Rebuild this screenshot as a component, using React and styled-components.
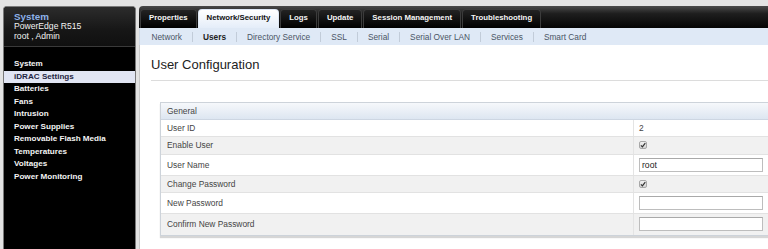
import styled, { createGlobalStyle } from "styled-components";

const NAV_ITEMS = [
  "System",
  "iDRAC Settings",
  "Batteries",
  "Fans",
  "Intrusion",
  "Power Supplies",
  "Removable Flash Media",
  "Temperatures",
  "Voltages",
  "Power Monitoring",
];

const TABS = ["Properties", "Network/Security", "Logs", "Update", "Session Management", "Troubleshooting"];

const SUBTABS = ["Network", "Users", "Directory Service", "SSL", "Serial", "Serial Over LAN", "Services", "Smart Card"];

const ROWS = [
  { label: "User ID", kind: "text", value: "2" },
  { label: "Enable User", kind: "check" },
  { label: "User Name", kind: "input", value: "root" },
  { label: "Change Password", kind: "check" },
  { label: "New Password", kind: "input", value: "" },
  { label: "Confirm New Password", kind: "input", value: "" },
];

const GlobalStyle = createGlobalStyle`
  html, body {
    margin: 0;
    padding: 0;
    overflow: hidden;
    background: #e3e3e3;
    font-family: "Liberation Sans", Arial, sans-serif;
  }
`;

const App = () => {
  return (
    <>
      <GlobalStyle />
      <Page>
        <Sidebar>
          <SideHeader>
            <SystemTitle>System</SystemTitle>
            <SideInfo>PowerEdge R515</SideInfo>
            <SideInfo>root , Admin</SideInfo>
          </SideHeader>
          <NavList>
            {NAV_ITEMS.map((item) => (
              <NavItem key={item} $active={item === "iDRAC Settings"}>{item}</NavItem>
            ))}
          </NavList>
        </Sidebar>
        <Main>
          <TabBar>
            {TABS.map((tab) => (
              <Tab key={tab} $active={tab === "Network/Security"}>{tab}</Tab>
            ))}
          </TabBar>
          <SubTabBar>
            {SUBTABS.map((sub) => (
              <SubTab key={sub} $active={sub === "Users"}>{sub}</SubTab>
            ))}
          </SubTabBar>
          <Content>
            <PageTitle>User Configuration</PageTitle>
            <Panel>
              <PanelHeader>General</PanelHeader>
              {ROWS.map((row, index) => (
                <Row key={row.label} $odd={index % 2 === 1} $tall={row.kind === "input"}>
                  <LabelCell>{row.label}</LabelCell>
                  <ValueCell>
                    {row.kind === "text" && row.value}
                    {row.kind === "check" && (
                      <CheckBox>
                        <svg width="6" height="6" viewBox="0 0 10 10">
                          <path d="M1.5 5.5 L4 8 L8.8 1.8" fill="none" stroke="#333" strokeWidth="2" />
                        </svg>
                      </CheckBox>
                    )}
                    {row.kind === "input" && <TextInput defaultValue={row.value} readOnly />}
                  </ValueCell>
                </Row>
              ))}
            </Panel>
          </Content>
        </Main>
      </Page>
    </>
  );
};

const Page = styled.div`
  display: flex;
  gap: 3px;
  height: 100vh;
  padding: 6px 0 0 3px;
  box-sizing: border-box;
  width: 800px;
`;

const Sidebar = styled.div`
  width: 133px;
  flex-shrink: 0;
  box-sizing: border-box;
  background: #000;
  border: 1px solid #7a7a7a;
  border-bottom: none;
  border-radius: 4px 4px 0 0;
  overflow: hidden;
`;

const SideHeader = styled.div`
  height: 40px;
  box-sizing: border-box;
  padding: 3.5px 0 0 10px;
  background: linear-gradient(#2c2c2c, #161616 60%, #101010);
  border-bottom: 1px solid #3a3a3a;
`;

const SystemTitle = styled.div`
  font-size: 9.8px;
  line-height: 11px;
  font-weight: bold;
  color: #8db2ea;
`;

const SideInfo = styled.div`
  font-size: 8.6px;
  line-height: 9px;
  color: #f2f2f2;
  margin-top: 0.5px;
`;

const NavList = styled.div`
  padding-top: 11px;
`;

const NavItem = styled.div`
  height: 12.56px;
  line-height: 12.56px;
  padding-left: 10px;
  font-size: 8.1px;
  font-weight: bold;
  color: ${(p) => (p.$active ? "#1e2440" : "#f4f4f4")};
  background: ${(p) => (p.$active ? "#e1e5f3" : "transparent")};
  white-space: nowrap;
`;

const Main = styled.div`
  flex: 1;
  display: flex;
  flex-direction: column;
  min-width: 0;
`;

const TabBar = styled.div`
  height: 22px;
  box-sizing: border-box;
  display: flex;
  align-items: flex-end;
  padding-left: 1px;
  background: linear-gradient(#4a4a4a, #1e1e1e 35%, #050505);
  border-radius: 4px 0 0 0;
`;

const Tab = styled.div`
  height: 19.5px;
  box-sizing: border-box;
  display: flex;
  align-items: center;
  padding: 0 8px 3px;
  font-size: 7.8px;
  font-weight: bold;
  white-space: nowrap;
  border-radius: 4px 4px 0 0;
  margin-right: 1px;
  color: ${(p) => (p.$active ? "#111" : "#f5f5f5")};
  background: ${(p) =>
    p.$active ? "linear-gradient(#ffffff, #e4edf9)" : "linear-gradient(#232323, #000)"};
  border: 1px solid ${(p) => (p.$active ? "#dfe8f5" : "#3c3c3c")};
  border-bottom: none;
`;

const SubTabBar = styled.div`
  height: 17px;
  display: flex;
  align-items: center;
  padding-left: 1.5px;
  background: #dfe9f6;
  border-left: 1px solid #cfd8e4;
`;

const SubTab = styled.div`
  position: relative;
  padding: 0 10px;
  font-size: 8.3px;
  line-height: 10px;
  white-space: nowrap;
  font-weight: ${(p) => (p.$active ? "bold" : "normal")};
  color: ${(p) => (p.$active ? "#222" : "#4a5565")};

  & + & {
    border-left: 1px solid #c2ccd9;
  }
`;

const Content = styled.div`
  flex: 1;
  background: #fff;
  border-left: 1px solid #c9c9c9;
  padding: 12px 0 0 11px;
`;

const PageTitle = styled.h1`
  margin: 0;
  font-size: 13px;
  line-height: 16px;
  font-weight: normal;
  color: #222;
  padding-bottom: 7px;
  border-bottom: 1px solid #dcdcdc;
`;

const Panel = styled.div`
  margin: 21px 0 0 9px;
  border: 1px solid #cdd3da;
  border-right: none;
  box-shadow: 0 2px 1px #d6d6d6;
`;

const PanelHeader = styled.div`
  height: 16px;
  line-height: 16px;
  padding-left: 6px;
  font-size: 8.4px;
  color: #444;
  background: linear-gradient(#f6f8fb, #dde6f1);
  border-bottom: 1px solid #cdd6e2;
`;

const Row = styled.div`
  display: grid;
  grid-template-columns: 472px 1fr;
  height: ${(p) => (p.$tall ? "21px" : "17.3px")};
  background: ${(p) => (p.$odd ? "#f1f1f1" : "#fff")};
  border-bottom: 1px solid #e2e2e2;
  box-sizing: border-box;

  &:last-child {
    border-bottom: none;
  }
`;

const LabelCell = styled.div`
  display: flex;
  align-items: center;
  padding-left: 6px;
  font-size: 8.4px;
  color: #444;
`;

const ValueCell = styled.div`
  display: flex;
  align-items: center;
  padding-left: 5px;
  font-size: 8.4px;
  color: #444;
  border-left: 1px solid #e4e4e4;
`;

const CheckBox = styled.span`
  width: 8px;
  height: 8px;
  box-sizing: border-box;
  display: flex;
  align-items: center;
  justify-content: center;
  border: 1px solid #a8a8a8;
  border-radius: 2px;
  background: linear-gradient(#f2f2f2, #d4d4d4);
`;

const TextInput = styled.input`
  width: 124px;
  height: 14px;
  box-sizing: border-box;
  padding: 0 2px;
  font-family: "Liberation Sans", Arial, sans-serif;
  font-size: 8.6px;
  color: #222;
  background: #fff;
  border: 1px solid #bdbdbd;
  border-top-color: #a9a9a9;
  outline: none;
`;

export default App;
